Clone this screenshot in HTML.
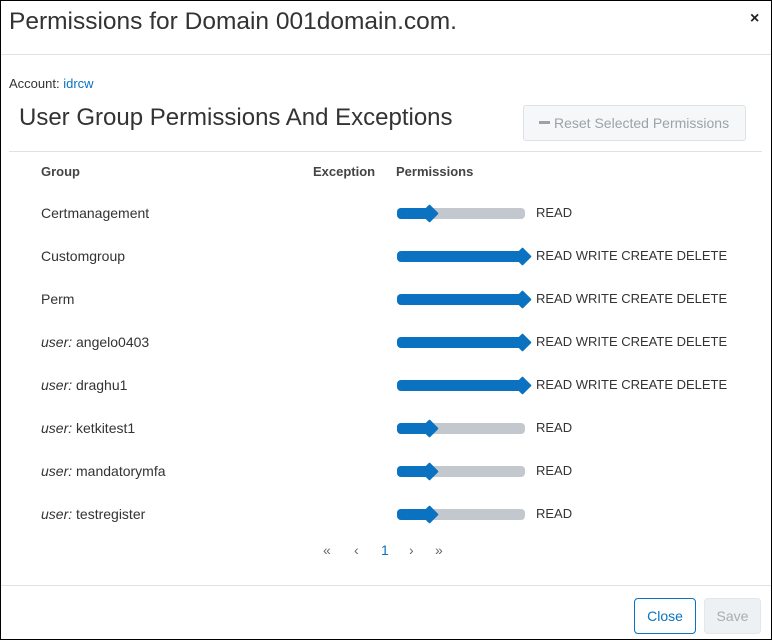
<!DOCTYPE html>
<html><head><style>
*{margin:0;padding:0;box-sizing:border-box}
body{width:772px;height:640px;background:#fff;font-family:"Liberation Sans",sans-serif;color:#333;position:relative;overflow:hidden}
.frame{position:absolute;left:0;top:0;width:772px;height:640px;border:1px solid #000}
.a{position:absolute;white-space:nowrap}
.t{font-size:14px;line-height:16px}
.p{font-size:13px;line-height:16px;color:#333}
.track{position:absolute;left:397px;width:128px;height:11px;border-radius:4px;background:#c2c8ce}
.fill{position:absolute;left:0;top:0;height:11px;border-radius:4px 0 0 4px;background:#0a72c0}
.thumb{position:absolute;top:-1px;width:13px;height:13px;background:#0a72c0;transform:rotate(45deg);border-radius:1px}
</style></head><body>
<div class="frame"></div>
<div class="a" style="left:9px;top:7px;font-size:24.5px;line-height:30px;color:#333">Permissions for Domain 001domain.com.</div>
<div class="a" style="left:750px;top:10px;font-size:16px;font-weight:bold;color:#222">×</div>
<div class="a" style="left:1px;top:54px;width:770px;height:1px;background:#dfe3e6"></div>
<div class="a t" style="left:9px;top:76px;font-size:13px">Account: <span style="color:#0a72c0">idrcw</span></div>
<div class="a" style="left:19px;top:104px;font-size:24px;line-height:28px;color:#333">User Group Permissions And Exceptions</div>
<div class="a" style="left:523px;top:105px;width:223px;height:36px;border:1px solid #dde2e6;border-radius:3px;background:#f5f7f8;color:#9aa3aa;font-size:14px;line-height:34px;padding-left:15px"><span style="display:inline-block;width:11px;height:3px;background:#9aa3aa;vertical-align:middle;margin-right:4px;position:relative;top:-2px"></span>Reset Selected Permissions</div>
<div class="a" style="left:9px;top:151px;width:753px;height:1px;background:#dfe3e6"></div>
<div class="a p" style="left:41px;top:164px;font-weight:bold;color:#444">Group</div>
<div class="a p" style="left:313px;top:164px;font-weight:bold;color:#444">Exception</div>
<div class="a p" style="left:396px;top:164px;font-weight:bold;color:#444">Permissions</div>

<div class="a t" style="left:41px;top:205px">Certmanagement</div>
<div class="track" style="top:208px"><div class="fill" style="width:32px"></div><div class="thumb" style="left:26px"></div></div>
<div class="a p" style="left:536px;top:205px">READ</div>

<div class="a t" style="left:41px;top:248px">Customgroup</div>
<div class="track" style="top:251px;background:#0a72c0"><div class="thumb" style="left:119px"></div></div>
<div class="a p" style="left:536px;top:248px">READ WRITE CREATE DELETE</div>

<div class="a t" style="left:41px;top:291px">Perm</div>
<div class="track" style="top:294px;background:#0a72c0"><div class="thumb" style="left:119px"></div></div>
<div class="a p" style="left:536px;top:291px">READ WRITE CREATE DELETE</div>

<div class="a t" style="left:41px;top:334px"><i>user:</i> angelo0403</div>
<div class="track" style="top:337px;background:#0a72c0"><div class="thumb" style="left:119px"></div></div>
<div class="a p" style="left:536px;top:334px">READ WRITE CREATE DELETE</div>

<div class="a t" style="left:41px;top:377px"><i>user:</i> draghu1</div>
<div class="track" style="top:380px;background:#0a72c0"><div class="thumb" style="left:119px"></div></div>
<div class="a p" style="left:536px;top:377px">READ WRITE CREATE DELETE</div>

<div class="a t" style="left:41px;top:420px"><i>user:</i> ketkitest1</div>
<div class="track" style="top:423px"><div class="fill" style="width:32px"></div><div class="thumb" style="left:26px"></div></div>
<div class="a p" style="left:536px;top:420px">READ</div>

<div class="a t" style="left:41px;top:463px"><i>user:</i> mandatorymfa</div>
<div class="track" style="top:466px"><div class="fill" style="width:32px"></div><div class="thumb" style="left:26px"></div></div>
<div class="a p" style="left:536px;top:463px">READ</div>

<div class="a t" style="left:41px;top:506px"><i>user:</i> testregister</div>
<div class="track" style="top:509px"><div class="fill" style="width:32px"></div><div class="thumb" style="left:26px"></div></div>
<div class="a p" style="left:536px;top:506px">READ</div>

<div class="a t" style="left:323px;top:542px;color:#666">«</div>
<div class="a t" style="left:354px;top:542px;color:#666">‹</div>
<div class="a t" style="left:381px;top:542px;color:#0a72c0">1</div>
<div class="a t" style="left:409px;top:542px;color:#666">›</div>
<div class="a t" style="left:435px;top:542px;color:#666">»</div>

<div class="a" style="left:1px;top:585px;width:770px;height:1px;background:#dfe3e6"></div>
<div class="a" style="left:634px;top:598px;width:62px;height:36px;border:1px solid #0a72c0;border-radius:4px;color:#0a72c0;font-size:14px;line-height:34px;text-align:center">Close</div>
<div class="a" style="left:704px;top:598px;width:57px;height:36px;border:1px solid #e3e7ea;border-radius:4px;background:#eef1f3;color:#a6adb3;font-size:14px;line-height:34px;text-align:center">Save</div>
</body></html>
